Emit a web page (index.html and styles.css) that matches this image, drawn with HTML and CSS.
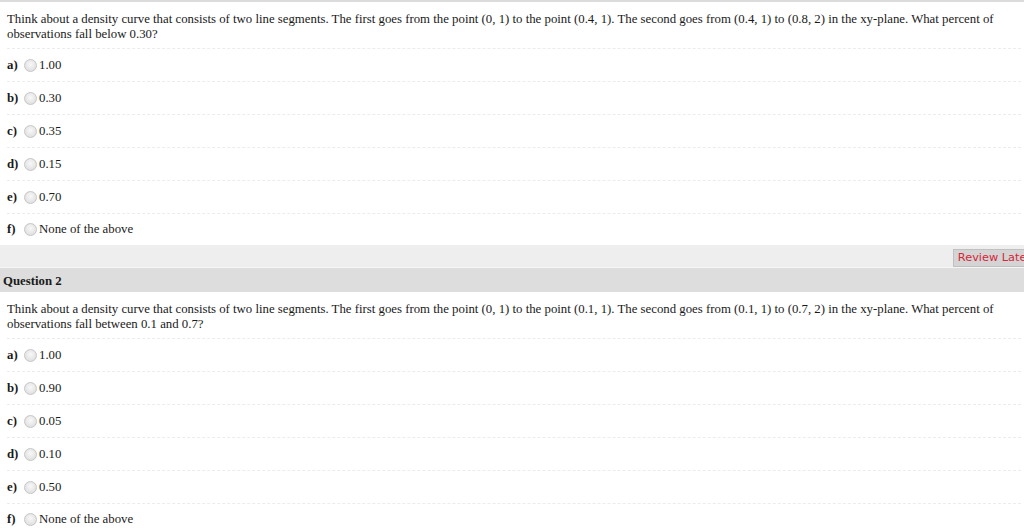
FILE: index.html
```html
<!DOCTYPE html>
<html>
<head>
<meta charset="utf-8">
<link rel="stylesheet" href="styles.css">
</head>
<body>
<div class="page">
  <div class="topline"></div>
  <div class="qbody">
    <div class="qtext">Think about a density curve that consists of two line segments. The first goes from the point (0, 1) to the point (0.4, 1). The second goes from (0.4, 1) to (0.8, 2) in the xy-plane. What percent of observations fall below 0.30?</div>
    <div class="opt"><b class="lbl">a)</b><span class="radio"></span><span class="val">1.00</span></div>
    <div class="opt"><b class="lbl">b)</b><span class="radio"></span><span class="val">0.30</span></div>
    <div class="opt"><b class="lbl">c)</b><span class="radio"></span><span class="val">0.35</span></div>
    <div class="opt"><b class="lbl">d)</b><span class="radio"></span><span class="val">0.15</span></div>
    <div class="opt"><b class="lbl">e)</b><span class="radio"></span><span class="val">0.70</span></div>
    <div class="opt last"><b class="lbl">f)</b><span class="radio"></span><span class="val">None of the above</span></div>
  </div>
  <div class="qfoot"><span class="review">Review Later</span></div>
  <div class="qhead">Question 2</div>
  <div class="qbody">
    <div class="qtext">Think about a density curve that consists of two line segments. The first goes from the point (0, 1) to the point (0.1, 1). The second goes from (0.1, 1) to (0.7, 2) in the xy-plane. What percent of observations fall between 0.1 and 0.7?</div>
    <div class="opt"><b class="lbl">a)</b><span class="radio"></span><span class="val">1.00</span></div>
    <div class="opt"><b class="lbl">b)</b><span class="radio"></span><span class="val">0.90</span></div>
    <div class="opt"><b class="lbl">c)</b><span class="radio"></span><span class="val">0.05</span></div>
    <div class="opt"><b class="lbl">d)</b><span class="radio"></span><span class="val">0.10</span></div>
    <div class="opt"><b class="lbl">e)</b><span class="radio"></span><span class="val">0.50</span></div>
    <div class="opt last"><b class="lbl">f)</b><span class="radio"></span><span class="val">None of the above</span></div>
  </div>
</div>
</body>
</html>
```
FILE: styles.css
```css
html, body {
  margin: 0;
  padding: 0;
  background: #fff;
}
.page {
  width: 1024px;
  height: 532px;
  overflow: hidden;
  font-family: "Liberation Serif", "Times New Roman", serif;
  font-size: 12.8px;
  color: #1a1a1a;
}
.topline {
  height: 2px;
  background: #dcdcdc;
}
.qbody {
  padding: 0 3px 0 7px;
}
.qtext {
  padding: 10px 0 6px;
  line-height: 15px;
  border-bottom: 1px dashed #ececec;
}
.opt {
  height: 32px;
  display: flex;
  align-items: center;
  border-bottom: 1px dashed #ececec;
}
.opt.last {
  border-bottom: none;
  height: 31px;
  padding-bottom: 1px;
  box-sizing: border-box;
}
.lbl {
  font-weight: bold;
  width: 17px;
}
.radio {
  width: 11px;
  height: 11px;
  border-radius: 50%;
  border: 1px solid #c6c6c6;
  background: radial-gradient(circle at 50% 40%, #f8f8f8 0%, #e4e4e4 65%, #d8d8d8 100%);
  margin-right: 2px;
  box-sizing: content-box;
}
.qfoot {
  height: 22px;
  background: #eeeeee;
  display: flex;
  align-items: center;
  justify-content: flex-end;
  border-bottom: 1px solid #f6f6f6;
}
.review {
  font-family: "DejaVu Sans", Verdana, sans-serif;
  font-size: 11.3px;
  color: #d4263a;
  background: #d4d4d4;
  border: 1px solid #c0c0c0;
  border-right: none;
  padding: 1px 6px 1px 4px;
  margin: 3px -13px 0 0;
  line-height: 14px;
}
.qhead {
  height: 24px;
  box-sizing: border-box;
  padding: 2px 0 0 3px;
  background: #dddddd;
  font-weight: bold;
  line-height: 22px;
}
```
